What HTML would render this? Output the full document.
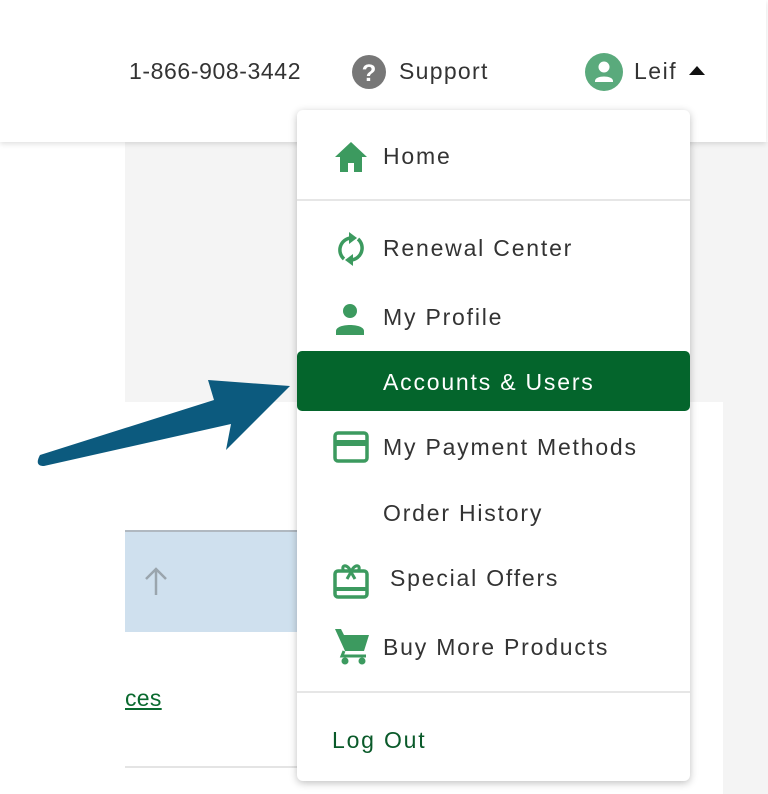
<!DOCTYPE html>
<html><head><style>
body{margin:0;width:768px;height:794px;position:relative;overflow:hidden;background:#fff;font-family:"Liberation Sans",sans-serif;}
.abs{position:absolute}
.menu{left:297px;top:110px;width:393px;height:671px;background:#fff;border-radius:6px;box-shadow:0 2px 8px rgba(0,0,0,.25);}
.it{position:absolute;left:86px;font-size:23px;color:#333;letter-spacing:1.8px;line-height:30px;}
.ic{position:absolute;left:36px}
</style></head><body>
<div class="abs" style="left:125px;top:142px;width:643px;height:260px;background:#f4f4f4"></div>
<div class="abs" style="left:0;top:0;width:766px;height:142px;background:#fff;box-shadow:0 2px 5px rgba(0,0,0,.12)"></div>
<div class="abs" style="left:723px;top:402px;width:45px;height:392px;background:#f4f4f4"></div>
<div class="abs" style="left:125px;top:405px;width:598px;height:389px;background:#fff;border-radius:4px"></div>
<div class="abs" style="left:125px;top:530px;width:172px;height:100px;background:#cfe0ee;border-top:2px solid #b0b8c0"></div>
<svg class="abs" style="left:141px;top:565px" width="30" height="32"><path d="M15 30V4M5 14 15 4l10 10" stroke="#9aa5ad" stroke-width="2.5" fill="none"/></svg>
<div class="abs" style="left:125px;top:685px;font-size:23px;color:#0a6a2f;text-decoration:underline;letter-spacing:0.3px">ces</div>
<div class="abs" style="left:125px;top:766px;width:172px;height:2px;background:#e4e4e4"></div>

<div class="abs" style="left:129px;top:58px;font-size:23px;color:#333;letter-spacing:0.6px">1-866-908-3442</div>
<svg class="abs" style="left:352px;top:55px" width="34" height="34"><circle cx="17" cy="17" r="17" fill="#777"/><text x="17" y="26" font-size="24" font-weight="bold" fill="#fff" text-anchor="middle" font-family="Liberation Sans">?</text></svg>
<div class="abs" style="left:399px;top:58px;font-size:23px;color:#333;letter-spacing:1.3px">Support</div>
<svg class="abs" style="left:585px;top:53px" width="38" height="38"><circle cx="19" cy="19" r="19" fill="#5aaa7c"/><circle cx="19" cy="14" r="5.5" fill="#fff"/><path d="M10 28c0-6 18-6 18 0v1H10z" fill="#fff"/></svg>
<div class="abs" style="left:634px;top:58px;font-size:23px;color:#333;letter-spacing:1.5px">Leif</div>
<div class="abs" style="left:689px;top:66px;width:0;height:0;border-left:8px solid transparent;border-right:8px solid transparent;border-bottom:9px solid #111"></div>

<svg class="abs" style="left:0;top:0" width="300" height="480"><path d="M40 455 L214 400 L208 380 L290 386 L226 450 L231 424 L44 466 Q34 466 40 455Z" fill="#0c5a7e"/></svg>

<div class="abs menu">
 <svg class="ic" style="top:30px" width="36" height="34" viewBox="0 0 36 34"><path d="M18 2 2 17h5v15h8v-9h6v9h8V17h5z" fill="#3c9a5f"/></svg>
 <div class="it" style="top:31px">Home</div>
 <div class="abs" style="left:0;top:89px;width:393px;height:2px;background:#e6e6e6"></div>
 <svg class="ic" style="top:119px;left:38px" width="32" height="40" viewBox="0 0 32 40"><path d="M9 30a12 12 0 0 1 7-21" stroke="#3c9a5f" stroke-width="3.5" fill="none"/><path d="M14 3l8 6-8 6z" fill="#3c9a5f"/><path d="M23 10a12 12 0 0 1-7 21" stroke="#3c9a5f" stroke-width="3.5" fill="none"/><path d="M18 25l-8 6 8 6z" fill="#3c9a5f"/></svg>
 <div class="it" style="top:123px">Renewal Center</div>
 <svg class="ic" style="top:192px" width="34" height="34" viewBox="0 0 34 34"><circle cx="17" cy="9" r="7" fill="#3c9a5f"/><path d="M3 33v-4c0-8 28-8 28 0v4z" fill="#3c9a5f"/></svg>
 <div class="it" style="top:192px">My Profile</div>
 <div class="abs" style="left:0;top:241px;width:393px;height:60px;background:#04652c;border-radius:5px"></div>
 <div class="it" style="top:257px;color:#fff">Accounts &amp; Users</div>
 <svg class="ic" style="top:321px" width="36" height="32" viewBox="0 0 36 32"><rect x="2" y="2" width="32" height="28" rx="3" fill="none" stroke="#3c9a5f" stroke-width="3.5"/><rect x="2" y="9" width="32" height="6" fill="#3c9a5f"/></svg>
 <div class="it" style="top:322px">My Payment Methods</div>
 <div class="it" style="top:388px">Order History</div>
 <svg class="ic" style="top:449px" width="36" height="40" viewBox="0 0 36 40"><rect x="2" y="12" width="32" height="26" rx="3" fill="none" stroke="#3c9a5f" stroke-width="3.5"/><rect x="2" y="28" width="32" height="4" fill="#3c9a5f"/><path d="M18 13c-4-10-11-6-7-1M18 13c4-10 11-6 7-1M14 20l4-7 4 7" stroke="#3c9a5f" stroke-width="3" fill="none"/></svg>
 <div class="it" style="top:453px;left:93px">Special Offers</div>
 <svg class="ic" style="top:516px" width="38" height="40" viewBox="0 0 38 40"><path d="M2 3h6l3 6h25l-5 16H12z" fill="#3c9a5f"/><path d="M11 25l-2 5h24" stroke="#3c9a5f" stroke-width="3" fill="none"/><circle cx="12" cy="35" r="3.5" fill="#3c9a5f"/><circle cx="29" cy="35" r="3.5" fill="#3c9a5f"/></svg>
 <div class="it" style="top:522px">Buy More Products</div>
 <div class="abs" style="left:0;top:581px;width:393px;height:2px;background:#e6e6e6"></div>
 <div class="it" style="top:615px;left:35px;color:#0a5a2a">Log Out</div>
</div>
</body></html>
